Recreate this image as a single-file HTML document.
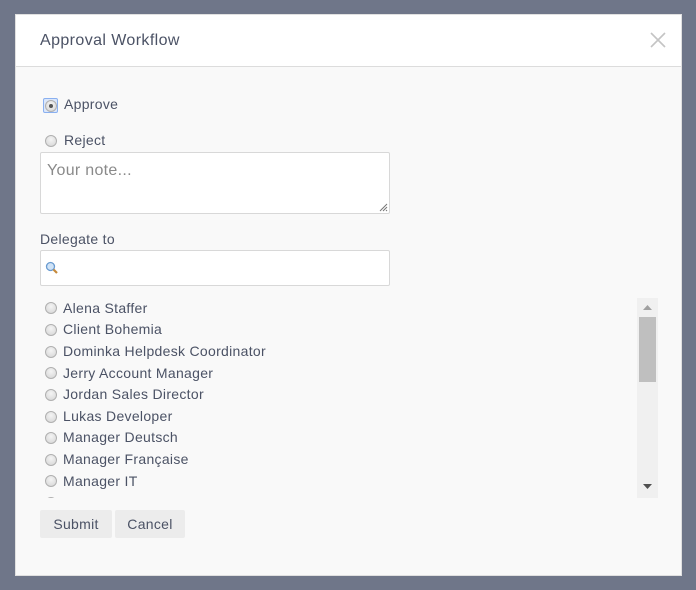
<!DOCTYPE html>
<html><head><style>
*{box-sizing:border-box;margin:0;padding:0}
body{width:696px;height:590px;background:#6f7689;font-family:"Liberation Sans","DejaVu Sans",sans-serif;color:#4b5265;position:relative;overflow:hidden}
.dlg{position:absolute;left:15px;top:14px;width:667px;height:562px;background:#f9f9f9;border:1px solid #e0e0e0}
.hd{height:52px;background:#fff;border-bottom:1px solid #dcdcdc;position:relative}
.hd h1{font-weight:normal;font-size:16px;position:absolute;left:24px;top:17px;color:#4b5265;letter-spacing:0.4px}
.x{position:absolute;right:14px;top:16px;width:18px;height:18px}
.r{position:absolute;width:12px;height:12px;border-radius:50%;border:1px solid #b0b0b0;background:radial-gradient(circle at 50% 35%,#f4f4f4,#d4d4d4)}
.lbl{position:absolute;font-size:14px;white-space:nowrap;letter-spacing:0.3px}
.ta{position:absolute;left:24px;top:137px;width:350px;height:62px;background:#fff;border:1px solid #d8d8d8;border-radius:2px;font-size:16px;color:#8a8a8a;padding:9px 6px;letter-spacing:0.3px}
.in{position:absolute;left:24px;top:235px;width:350px;height:36px;background:#fff;border:1px solid #d8d8d8;border-radius:2px}
.list{position:absolute;left:24px;top:283px;width:620px;height:200px;overflow:hidden}
.btn{position:absolute;top:495px;height:28px;background:#ececec;border-radius:2px;font-size:14px;text-align:center;line-height:28px;letter-spacing:0.3px}
</style></head><body>
<div class="dlg">
<div class="hd"><h1>Approval Workflow</h1>
<svg class="x" viewBox="0 0 18 18"><path d="M2 2L16 16M16 2L2 16" stroke="#c4c4c4" stroke-width="1.6"/></svg></div>
<div style="position:absolute;left:27px;top:83px;width:15px;height:15px;border:1px solid #8ab0f0;background:#dbe7fb;border-radius:2px"></div>
<div class="r" style="left:29px;top:85px"></div><div style="position:absolute;left:33px;top:89px;width:4px;height:4px;border-radius:50%;background:#555"></div>
<div class="lbl" style="left:48px;top:81px">Approve</div>
<div class="r" style="left:29px;top:120px"></div>
<div class="lbl" style="left:48px;top:117px">Reject</div>
<div class="ta">Your note...
<svg style="position:absolute;right:1px;bottom:1px" width="9" height="9"><path d="M8 1L1 8M8 4L4 8M8 7L7 8" stroke="#777" stroke-width="1"/></svg></div>
<div class="lbl" style="left:24px;top:216px">Delegate to</div>
<div class="in"><svg style="position:absolute;left:4px;top:10px" width="14" height="14"><circle cx="5.5" cy="5.5" r="4" fill="#cfe3f7" stroke="#6a9bd0" stroke-width="1.3"/><path d="M8.5 8.5L12 12" stroke="#c58a3c" stroke-width="2.2"/></svg></div>
<div class="list">
<div class="r" style="left:5px;top:4px"></div><div class="lbl" style="left:23px;top:2px">Alena Staffer</div>
<div class="r" style="left:5px;top:26px"></div><div class="lbl" style="left:23px;top:23px">Client Bohemia</div>
<div class="r" style="left:5px;top:48px"></div><div class="lbl" style="left:23px;top:45px">Dominka Helpdesk Coordinator</div>
<div class="r" style="left:5px;top:69px"></div><div class="lbl" style="left:23px;top:67px">Jerry Account Manager</div>
<div class="r" style="left:5px;top:91px"></div><div class="lbl" style="left:23px;top:88px">Jordan Sales Director</div>
<div class="r" style="left:5px;top:113px"></div><div class="lbl" style="left:23px;top:110px">Lukas Developer</div>
<div class="r" style="left:5px;top:134px"></div><div class="lbl" style="left:23px;top:131px">Manager Deutsch</div>
<div class="r" style="left:5px;top:156px"></div><div class="lbl" style="left:23px;top:153px">Manager Française</div>
<div class="r" style="left:5px;top:177px"></div><div class="lbl" style="left:23px;top:175px">Manager IT</div>
<div class="r" style="left:5px;top:199px"></div><div class="lbl" style="left:23px;top:197px">Manager Italiano</div>
<div style="position:absolute;left:597px;top:0;width:21px;height:200px;background:#f0f0f0">
<div style="position:absolute;left:2px;top:19px;width:17px;height:65px;background:#bfbfbf"></div>
<svg style="position:absolute;left:6px;top:7px" width="9" height="5"><path d="M0 5L4.5 0L9 5Z" fill="#a0a0a0"/></svg>
<svg style="position:absolute;left:6px;top:186px" width="9" height="5"><path d="M0 0L4.5 5L9 0Z" fill="#505050"/></svg>
</div></div>
<div class="btn" style="left:24px;width:72px">Submit</div>
<div class="btn" style="left:99px;width:70px">Cancel</div>
</div>
</body></html>
